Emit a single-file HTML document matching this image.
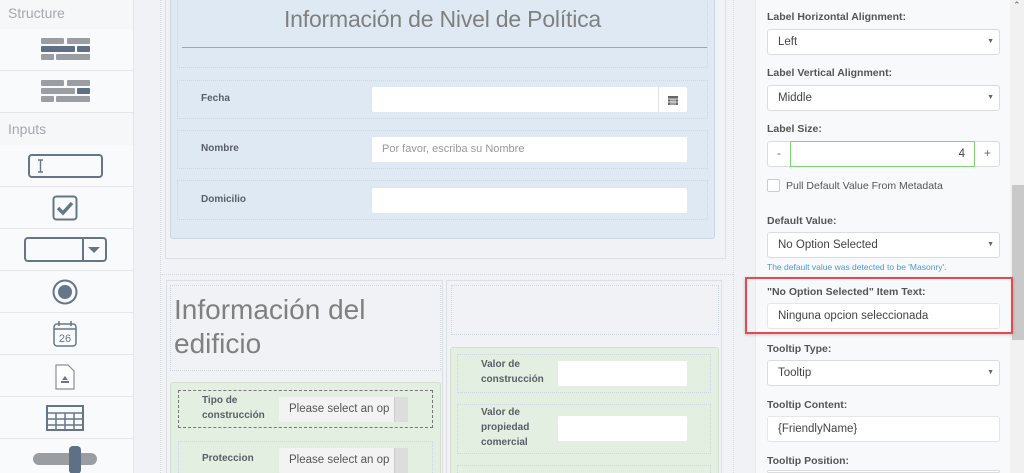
<!DOCTYPE html>
<html style="width:1024px;height:473px;overflow:hidden"><head><meta charset="utf-8"><style>
*{box-sizing:border-box;margin:0;padding:0}
body{width:1024px;height:473px;overflow:hidden;background:#f1f2f5;font-family:"Liberation Sans",sans-serif;position:relative}
.a{position:absolute}
.side{left:0;top:0;width:134px;height:473px;background:#f6f7f9;border-right:1px solid #e3e5e8;overflow:hidden}
.hd{position:absolute;left:0;width:134px;color:#a4a8ae;font-size:14px;padding-left:8px;background:#f6f7f9;box-shadow:0 2px 2px rgba(0,0,0,.06)}
.row{position:absolute;left:0;width:134px;border-bottom:1px solid #e4e6e9;background:#f9fafb}
.lbl{position:absolute;font-size:10px;font-weight:bold;color:#5a5e66;line-height:15px}
.inp{position:absolute;background:#fff;border-radius:2px;font-size:11px;color:#999;line-height:25px;padding-left:10px;height:25px}
.dot{position:absolute;border:1px dotted #cfd6dd}
.rp .l{position:absolute;left:767px;font-size:10.5px;font-weight:bold;color:#555}
.rp .f{position:absolute;left:767px;width:233px;height:26px;background:#fff;border:1px solid #dcdcdc;border-radius:3px;font-size:11.5px;color:#444;padding-left:10px;line-height:24px}
.car{position:absolute;right:5px;top:0;font-size:7px;color:#666}
</style></head><body>
<div class="a side">
 <div class="hd" style="top:0;height:29px;line-height:27px">Structure</div>
 <div class="row" style="top:29px;height:42px"><svg class="a" style="left:41px;top:9px" width="50" height="24"><g fill="#9a9da2"><rect x="0" y="0" width="23" height="6" rx="1"/><rect x="26" y="0" width="23" height="6" rx="1"/><rect x="0" y="16" width="13" height="6" rx="1"/><rect x="15" y="16" width="34" height="6" rx="1"/></g><g fill="#5f6f85"><rect x="0" y="8" width="34" height="6" rx="1"/><rect x="36" y="8" width="13" height="6" rx="1"/></g></svg></div>
 <div class="row" style="top:71px;height:42px"><svg class="a" style="left:41px;top:9px" width="50" height="24"><g fill="#9a9da2"><rect x="0" y="0" width="23" height="6" rx="1"/><rect x="26" y="0" width="23" height="6" rx="1"/><rect x="0" y="16" width="13" height="6" rx="1"/><rect x="15" y="16" width="34" height="6" rx="1"/><rect x="0" y="8" width="34" height="6" rx="1"/></g><rect x="36" y="8" width="13" height="6" rx="1" fill="#5f6f85"/></svg></div>
 <div class="hd" style="top:113px;height:32px;line-height:32px">Inputs</div>
 <div class="row" style="top:145px;height:42px"><svg class="a" style="left:28px;top:9px" width="76" height="24"><rect x="1" y="1" width="73" height="22" rx="3" fill="none" stroke="#66768a" stroke-width="2"/><path d="M10 6h5M12.5 6v12M10 18h5" stroke="#66768a" stroke-width="1.4"/></svg></div>
 <div class="row" style="top:187px;height:42px"><svg class="a" style="left:52px;top:8px" width="26" height="26"><rect x="1.5" y="1.5" width="23" height="23" rx="3" fill="none" stroke="#66768a" stroke-width="2"/><path d="M6 13l5 5 9-10" fill="none" stroke="#66768a" stroke-width="3.5"/></svg></div>
 <div class="row" style="top:229px;height:42px"><svg class="a" style="left:24px;top:8px" width="84" height="26"><rect x="1" y="1" width="81" height="23" rx="3" fill="none" stroke="#66768a" stroke-width="2"/><path d="M59 1v23" stroke="#66768a" stroke-width="2"/><path d="M64 10h12l-6 6z" fill="#66768a"/></svg></div>
 <div class="row" style="top:271px;height:42px"><svg class="a" style="left:52px;top:8px" width="26" height="26"><circle cx="13" cy="13" r="11.5" fill="none" stroke="#66768a" stroke-width="2"/><circle cx="13" cy="13" r="7" fill="#66768a"/></svg></div>
 <div class="row" style="top:313px;height:42px"><svg class="a" style="left:53px;top:8px" width="24" height="26"><rect x="1" y="3" width="22" height="22" rx="3" fill="none" stroke="#66768a" stroke-width="1.5"/><path d="M1 8h22M6 0v5M18 0v5" stroke="#66768a" stroke-width="1.5"/><text x="12" y="21" font-size="11" text-anchor="middle" fill="#66768a" font-family="Liberation Sans">26</text></svg></div>
 <div class="row" style="top:355px;height:42px"><svg class="a" style="left:55px;top:9px" width="20" height="26"><path d="M1 1h12l6 6v18H1z" fill="#fff" stroke="#8a8f96" stroke-width="1.2"/><path d="M7 16l3-4 3 4z M6 17h8v2H6z" fill="#66768a"/></svg></div>
 <div class="row" style="top:397px;height:42px"><svg class="a" style="left:46px;top:8px" width="38" height="26"><rect x="1" y="1" width="36" height="24" fill="none" stroke="#66768a" stroke-width="2"/><path d="M1 8h36M1 14h36M1 20h36M10 8v17M19 8v17M28 8v17" stroke="#66768a" stroke-width="1.5"/></svg></div>
 <div class="row" style="top:439px;height:34px;border:none"><svg class="a" style="left:32px;top:7px" width="68" height="28"><rect x="1" y="7" width="64" height="12" rx="6" fill="#9a9da2"/><rect x="37" y="0" width="12" height="28" rx="4" fill="#5f6f85"/></svg></div>
</div>
<div class="a" style="left:160px;top:0;width:1px;height:473px;border-left:1px dotted #d5d8dc"></div>
<div class="a" style="left:733px;top:0;width:1px;height:473px;border-left:1px dotted #d5d8dc"></div>
<div class="a" style="left:161px;top:274px;width:572px;border-top:1px dotted #d5d8dc"></div>
<div class="a" style="left:165px;top:-2px;width:561px;height:261px;border:1px solid #dcdfe3"></div>
<div class="a" style="left:170px;top:-2px;width:545px;height:241px;background:#dfe9f3;border:1px solid #cdd6df;border-radius:3px"></div>
<div class="dot" style="left:177px;top:-2px;width:531px;height:70px"></div>
<div class="a" style="left:170px;top:6px;width:545px;text-align:center;font-size:23px;color:#808080;letter-spacing:-0.2px">Información de Nivel de Política</div>
<div class="a" style="left:182px;top:47px;width:525px;height:1px;background:#7aaee0"></div>
<div class="dot" style="left:177px;top:80px;width:531px;height:39px"></div>
<div class="dot" style="left:177px;top:130px;width:531px;height:39px"></div>
<div class="dot" style="left:177px;top:180px;width:531px;height:40px"></div>
<div class="lbl" style="left:201px;top:91px">Fecha</div>
<div class="lbl" style="left:201px;top:141px">Nombre</div>
<div class="lbl" style="left:201px;top:192px">Domicilio</div>
<div class="inp" style="left:372px;top:87px;width:315px"></div>
<div class="a" style="left:658px;top:87px;width:29px;height:25px;border-left:1px solid #e3e3e3;text-align:center;line-height:25px"><svg width="10" height="10" style="vertical-align:middle"><rect x="0" y="1" width="10" height="9" fill="#666"/><path d="M0 4h10M3 4v6M5 4v6M7 4v6M0 7h10" stroke="#fff" stroke-width=".7"/></svg></div>
<div class="inp" style="left:372px;top:137px;width:315px;color:#999">Por favor, escriba su Nombre</div>
<div class="inp" style="left:372px;top:188px;width:315px"></div>
<div class="a" style="left:166px;top:280px;width:277px;height:200px;border:1px solid #dcdfe3"></div>
<div class="dot" style="left:170px;top:285px;width:271px;height:86px"></div>
<div class="a" style="left:174px;top:293px;font-size:28px;color:#808080;line-height:34px">Información del<br>edificio</div>
<div class="a" style="left:170px;top:382px;width:271px;height:100px;background:#e3efe1;border:1px solid #d4e0d2;border-radius:3px"></div>
<div class="a" style="left:178px;top:390px;width:255px;height:38px;border:1.5px dashed #777"></div>
<div class="lbl" style="left:202px;top:393px">Tipo de<br>construcción</div>
<div class="inp" style="left:279px;top:397px;width:129px;background:#f3f3f3;color:#555;font-size:11.5px;overflow:hidden;white-space:nowrap">Please select an op</div>
<div class="a" style="left:394px;top:397px;width:14px;height:25px;background:#ddd;border-left:1px solid #ccc"></div>
<div class="dot" style="left:178px;top:441px;width:255px;height:40px"></div>
<div class="lbl" style="left:202px;top:451px">Proteccion</div>
<div class="inp" style="left:279px;top:448px;width:129px;background:#f3f3f3;color:#555;font-size:11.5px;overflow:hidden;white-space:nowrap">Please select an op</div>
<div class="a" style="left:394px;top:448px;width:14px;height:25px;background:#ddd;border-left:1px solid #ccc"></div>
<div class="a" style="left:446px;top:280px;width:276px;height:200px;border:1px solid #dcdfe3"></div>
<div class="dot" style="left:451px;top:285px;width:268px;height:50px"></div>
<div class="a" style="left:450px;top:347px;width:269px;height:130px;background:#e3efe1;border:1px solid #d4e0d2;border-radius:3px"></div>
<div class="dot" style="left:457px;top:354px;width:254px;height:39px"></div>
<div class="dot" style="left:457px;top:404px;width:254px;height:50px"></div>
<div class="dot" style="left:457px;top:465px;width:254px;height:20px"></div>
<div class="lbl" style="left:481px;top:357px">Valor de<br>construcción</div>
<div class="lbl" style="left:481px;top:405px">Valor de<br>propiedad<br>comercial</div>
<div class="inp" style="left:558px;top:361px;width:129px"></div>
<div class="inp" style="left:558px;top:416px;width:129px"></div>
<div class="a" style="left:755px;top:0;width:255px;height:473px;background:#f8f9fa;border-left:1px solid #e6e8eb"></div>
<div class="a" style="left:1010px;top:0;width:14px;height:473px;background:#f1f1f1"></div>
<div class="a" style="left:1012px;top:185px;width:12px;height:155px;background:#c9c9c9"></div>
<div class="a" style="left:1013px;top:0;font-size:9px;color:#666">⌃</div>
<div class="rp">
 <div class="l" style="top:11px">Label Horizontal Alignment:</div>
 <div class="f" style="top:29px">Left<span class="car">▼</span></div>
 <div class="l" style="top:67px">Label Vertical Alignment:</div>
 <div class="f" style="top:85px">Middle<span class="car">▼</span></div>
 <div class="l" style="top:123px">Label Size:</div>
 <div class="f" style="top:141px;padding:0">
  <span class="a" style="left:9px;top:0;color:#666">-</span>
  <span class="a" style="left:22px;top:-1px;width:185px;height:26px;border:1px solid #7ed56f;text-align:right;padding-right:9px">4</span>
  <span class="a" style="left:216px;top:0;color:#666">+</span>
 </div>
 <div class="a" style="left:767px;top:179px;width:13px;height:13px;background:#fff;border:1px solid #ccc;border-radius:2px"></div>
 <div class="a" style="left:786px;top:180px;font-size:10.5px;color:#555">Pull Default Value From Metadata</div>
 <div class="l" style="top:215px">Default Value:</div>
 <div class="f" style="top:232px">No Option Selected<span class="car">▼</span></div>
 <div class="a" style="left:767px;top:262px;font-size:8.5px;color:#4a9ad8">The default value was detected to be 'Masonry'.</div>
 <div class="a" style="left:745px;top:277px;width:268px;height:57px;border:2px solid #e9484e;box-shadow:0 1px 3px rgba(0,0,0,.2)"></div>
 <div class="l" style="top:286px">"No Option Selected" Item Text:</div>
 <div class="f" style="top:303px;border-color:#e6e6e6">Ninguna opcion seleccionada</div>
 <div class="l" style="top:343px">Tooltip Type:</div>
 <div class="f" style="top:360px">Tooltip<span class="car">▼</span></div>
 <div class="l" style="top:399px">Tooltip Content:</div>
 <div class="f" style="top:416px;border-color:#e6e6e6">{FriendlyName}</div>
 <div class="l" style="top:455px">Tooltip Position:</div>
 <div class="f" style="top:470px;height:3px"></div>
</div>
</body></html>
